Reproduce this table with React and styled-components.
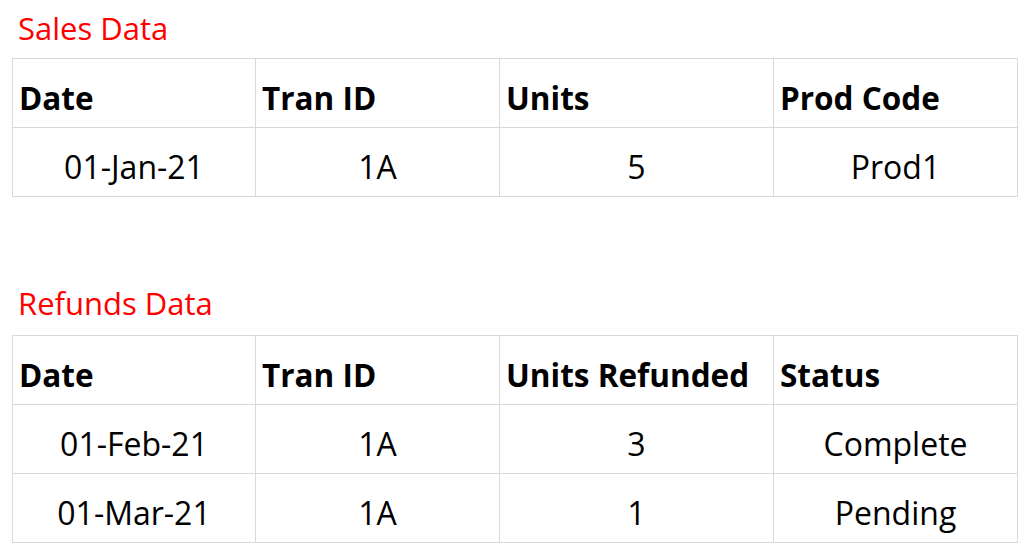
import React from "react";
import styled, { createGlobalStyle } from "styled-components";

const Global = createGlobalStyle`
  html, body { margin: 0; padding: 0; background: #fff; }
  body { font-family: "Open Sans", "Noto Sans", sans-serif; color: #000; }
`;

const Page = styled.div`
  padding: 0 0 0 12px;
  width: 1006px;
`;

const Section = styled.section`
  display: flex;
  flex-direction: column;
`;

const Title = styled.h2`
  margin: ${(p) => p.$top}px 0 ${(p) => p.$bottom}px 6px;
  font-size: 31px;
  line-height: 40px;
  font-weight: 400;
  color: #ff0000;
`;

const Table = styled.table`
  border-collapse: collapse;
  table-layout: fixed;
  width: 1006px;
`;

const Th = styled.th`
  border: 1px solid #d9d9d9;
  height: 69px;
  padding: 9px 0 0 6px;
  text-align: left;
  font-size: 31.5px;
  font-weight: 700;
  box-sizing: border-box;
`;

const Td = styled.td`
  border: 1px solid #d9d9d9;
  height: 69px;
  padding: 9px 0 0 0;
  text-align: center;
  font-size: 32px;
  font-weight: 400;
  box-sizing: border-box;
`;

const widths = [243, 244, 274, 244];

function DataTable({ headers, rows }) {
  return (
    <Table>
      <colgroup>
        {widths.map((w, i) => (
          <col key={i} style={{ width: w }} />
        ))}
      </colgroup>
      <thead>
        <tr>
          {headers.map((h) => (
            <Th key={h}>{h}</Th>
          ))}
        </tr>
      </thead>
      <tbody>
        {rows.map((r, i) => (
          <tr key={i}>
            {r.map((c, j) => (
              <Td key={j}>{c}</Td>
            ))}
          </tr>
        ))}
      </tbody>
    </Table>
  );
}

export default function App() {
  return (
    <>
      <Global />
      <Page>
        <Section>
          <Title $top={8} $bottom={10}>Sales Data</Title>
          <DataTable
            headers={["Date", "Tran ID", "Units", "Prod Code"]}
            rows={[["01-Jan-21", "1A", "5", "Prod1"]]}
          />
        </Section>
        <Section>
          <Title $top={86} $bottom={12}>Refunds Data</Title>
          <DataTable
            headers={["Date", "Tran ID", "Units Refunded", "Status"]}
            rows={[
              ["01-Feb-21", "1A", "3", "Complete"],
              ["01-Mar-21", "1A", "1", "Pending"],
            ]}
          />
        </Section>
      </Page>
    </>
  );
}
